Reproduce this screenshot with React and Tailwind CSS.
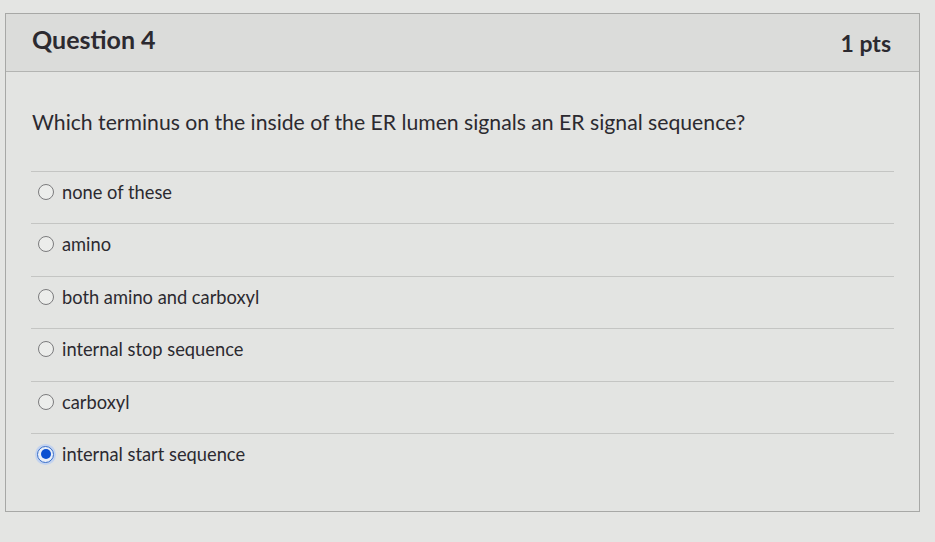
const options = [
  { label: "none of these", checked: false },
  { label: "amino", checked: false },
  { label: "both amino and carboxyl", checked: false },
  { label: "internal stop sequence", checked: false },
  { label: "carboxyl", checked: false },
  { label: "internal start sequence", checked: true },
];

const Radio = ({ checked }) =>
  checked ? (
    <span className="flex h-[17px] w-[17px] items-center justify-center rounded-full border-[1.5px] border-[#3a6fc9] bg-[#e8eef8] shadow-[0_0_0_2px_#c3d3ef]">
      <span className="h-[10px] w-[10px] rounded-full bg-[#0a4fd1]" />
    </span>
  ) : (
    <span className="h-[16px] w-[16px] rounded-full border-[1.5px] border-[#7b7b7d] bg-[#ecedeb]" />
  );

export default function App() {
  return (
    <div className="h-[542px] w-[935px] bg-[#e4e5e3] pl-[5px] pt-[13px] font-['Lato',sans-serif] text-[#2c2a30]">
      <div className="flex h-[499px] w-[915px] flex-col border border-[#a7a8a6] bg-[#e3e4e2]">
        <div className="flex h-[58px] items-center justify-between border-b border-[#b3b4b2] bg-[#dbdcda] pl-[26px] pr-[28px]">
          <h2 className="mb-[6px] text-[25px] font-bold">Question 4</h2>
          <span className="mt-[2px] text-[23px] font-bold">1 pts</span>
        </div>
        <div className="px-[25px] pt-[38px]">
          <p className="pl-[1px] text-[21.2px] leading-[24px]">
            Which terminus on the inside of the ER lumen signals an ER signal sequence?
          </p>
          <div className="mt-[37px]">
            {options.map((o) => (
              <div key={o.label} className="flex h-[52.4px] items-start gap-[8px] border-t border-[#c4c5c3] pl-[6px] pt-[9px]">
                <span className="mt-[3px] flex w-[17px] justify-center">
                  <Radio checked={o.checked} />
                </span>
                <span className="text-[18.3px] leading-[22px]">{o.label}</span>
              </div>
            ))}
          </div>
        </div>
      </div>
    </div>
  );
}
